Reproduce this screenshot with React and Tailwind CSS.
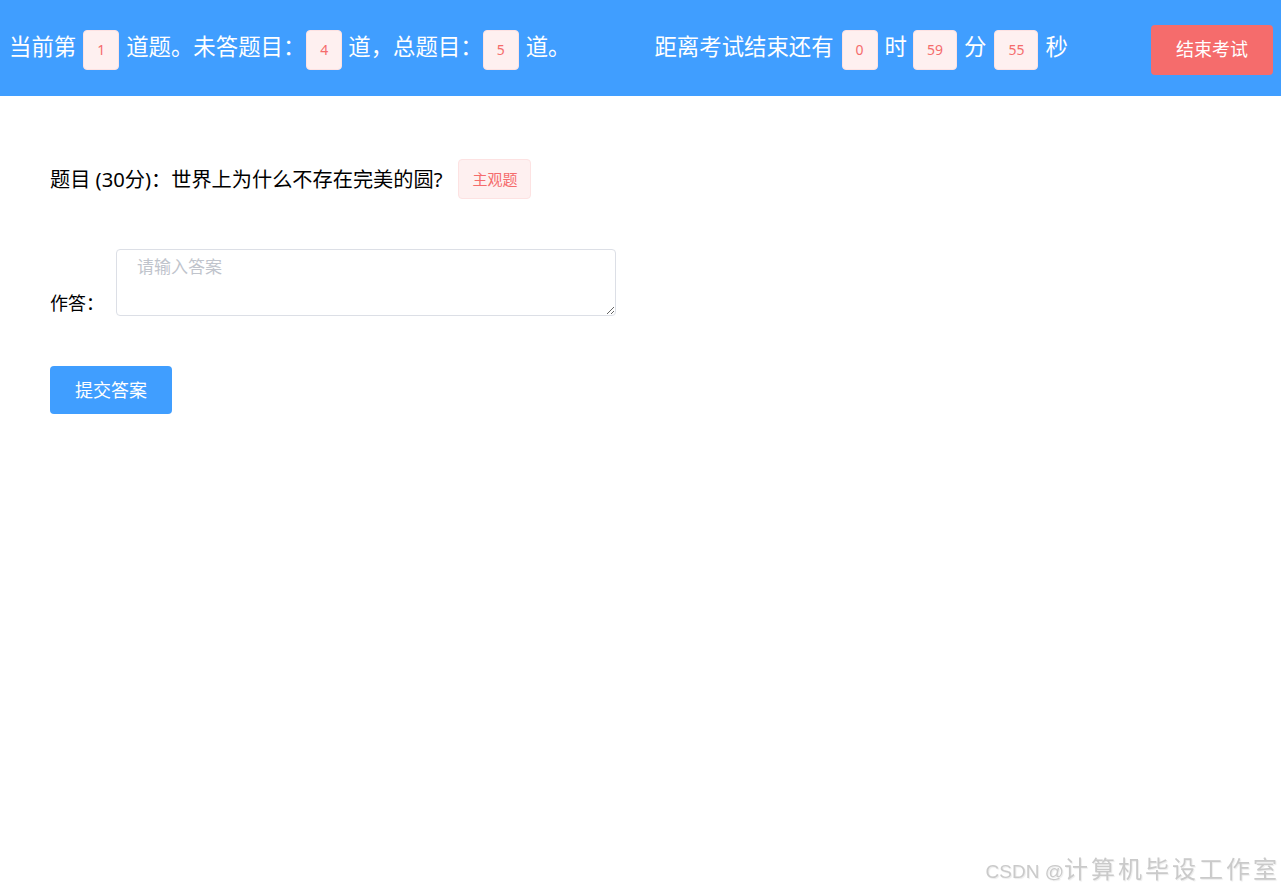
import React from "react";

const font = { fontFamily: '"Noto Sans", "Noto Sans CJK SC", sans-serif' };

function Num({ children, className = "" }) {
  return (
    <span
      className={
        "inline-flex h-[40px] min-w-[36px] items-center justify-center rounded-[4px] border border-[#fde2e2] bg-[#fef0f0] px-[13px] text-[14px] text-[#f56c6c] " +
        className
      }
    >
      {children}
    </span>
  );
}

function T({ children }) {
  return <span className="mb-[7px]">{children}</span>;
}

export default function App() {
  return (
    <div className="relative min-h-screen w-full bg-white" style={font}>
      <header className="flex h-[96px] items-center bg-[#409eff] pl-[9px] pr-[8px] pt-[4px] text-[22.4px] text-white">
        <div className="flex items-center whitespace-nowrap">
          <T>当前第</T>
          <Num className="ml-[7px] mr-[7px]">1</Num>
          <T>道题。未答题目：</T>
          <Num className="ml-[1px] mr-[6px]">4</Num>
          <T>道，总题目：</T>
          <Num className="ml-[0px] mr-[7px]">5</Num>
          <T>道。</T>
        </div>
        <div className="ml-[84px] flex items-center whitespace-nowrap">
          <T>距离考试结束还有</T>
          <Num className="ml-[8px] mr-[7px]">0</Num>
          <T>时</T>
          <Num className="ml-[6px] mr-[7px]">59</Num>
          <T>分</T>
          <Num className="ml-[8px] mr-[7px]">55</Num>
          <T>秒</T>
        </div>
        <button className="mb-[1px] ml-auto flex h-[50px] w-[122px] items-center justify-center rounded-[4px] bg-[#f56c6c] text-[18px] text-white">
          结束考试
        </button>
      </header>

      <main className="pl-[50px]">
        <div className="mt-[63px] flex items-center">
          <span className="text-[20.2px] text-black">题目 (30分)：世界上为什么不存在完美的圆?</span>
          <span className="ml-[16px] inline-flex h-[40px] items-center rounded-[4px] border border-[#fde2e2] bg-[#fef0f0] px-[13px] text-[15px] text-[#f56c6c]">
            主观题
          </span>
        </div>

        <div className="mt-[50px] flex items-end">
          <span className="mb-[1px] text-[18px] leading-[24px] text-black">作答：</span>
          <textarea
            placeholder="请输入答案"
            className="ml-[12px] h-[67px] w-[500px] rounded-[4px] border border-[#dcdfe6] px-[20px] py-[5px] text-[17px] leading-[24px] text-[#606266] outline-none placeholder:text-[#c0c4cc]"
          />
        </div>

        <button className="mt-[50px] flex h-[48px] w-[122px] items-center justify-center rounded-[4px] bg-[#409eff] text-[18px] text-white">
          提交答案
        </button>
      </main>

      <div
        className="fixed bottom-[6px] right-[1px] flex items-baseline whitespace-nowrap text-[#cacaca] [text-shadow:1px_1px_1px_rgba(0,0,0,0.08)]"
        style={{ fontFamily: '"Liberation Sans", "Noto Sans CJK SC", sans-serif' }}
      >
        <span className="text-[19px]">CSDN @</span>
        <span className="text-[24px] tracking-[3px]">计算机毕设工作室</span>
      </div>
    </div>
  );
}
